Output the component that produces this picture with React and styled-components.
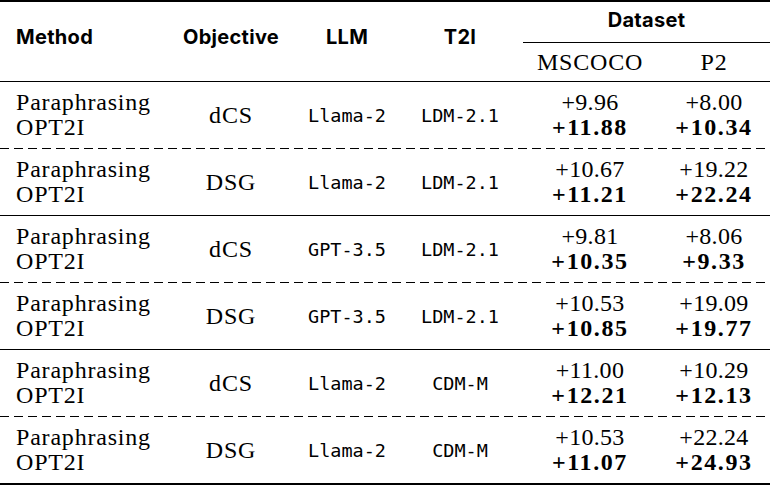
import styled, { createGlobalStyle } from 'styled-components'

const GlobalStyle = createGlobalStyle`
  body {
    margin: 0;
    background: #fff;
    color: #000;
  }
`

const COLS = '178px 106px 126px 100px 160px 100px'

const rows = [
  { obj: 'dCS', llm: 'Llama-2', t2i: 'LDM-2.1', coco: ['+9.96', '+11.88'], p2: ['+8.00', '+10.34'], rule: 'dashed' },
  { obj: 'DSG', llm: 'Llama-2', t2i: 'LDM-2.1', coco: ['+10.67', '+11.21'], p2: ['+19.22', '+22.24'], rule: 'solid' },
  { obj: 'dCS', llm: 'GPT-3.5', t2i: 'LDM-2.1', coco: ['+9.81', '+10.35'], p2: ['+8.06', '+9.33'], rule: 'dashed' },
  { obj: 'DSG', llm: 'GPT-3.5', t2i: 'LDM-2.1', coco: ['+10.53', '+10.85'], p2: ['+19.09', '+19.77'], rule: 'solid' },
  { obj: 'dCS', llm: 'Llama-2', t2i: 'CDM-M', coco: ['+11.00', '+12.21'], p2: ['+10.29', '+12.13'], rule: 'dashed' },
  { obj: 'DSG', llm: 'Llama-2', t2i: 'CDM-M', coco: ['+10.53', '+11.07'], p2: ['+22.24', '+24.93'], rule: 'bottom' },
]

export default function App() {
  return (
    <>
      <GlobalStyle />
      <Table>
        <Rule $thick />
        <Header>
          <HeadCell $left>Method</HeadCell>
          <HeadCell>Objective</HeadCell>
          <HeadCell>LLM</HeadCell>
          <HeadCell>T2I</HeadCell>
          <DatasetGroup>
            <DatasetTitle>Dataset</DatasetTitle>
            <CmidRule />
            <SubHeader>
              <Serif>MSCOCO</Serif>
              <Serif $last>P2</Serif>
            </SubHeader>
          </DatasetGroup>
        </Header>
        <Rule />
        {rows.map((r, i) => (
          <div key={i}>
            <Row>
              <MethodCell>
                <Serif as="span">Paraphrasing</Serif>
                <Serif as="span">OPT2I</Serif>
              </MethodCell>
              <Serif>{r.obj}</Serif>
              <Mono>{r.llm}</Mono>
              <Mono>{r.t2i}</Mono>
              <Values>
                <Num>{r.coco[0]}</Num>
                <Num $bold>{r.coco[1]}</Num>
              </Values>
              <Values $last>
                <Num>{r.p2[0]}</Num>
                <Num $bold>{r.p2[1]}</Num>
              </Values>
            </Row>
            {r.rule === 'dashed' && <Rule $dashed />}
            {r.rule === 'solid' && <Rule />}
            {r.rule === 'bottom' && <Rule $thick />}
          </div>
        ))}
      </Table>
    </>
  )
}

const Table = styled.div`
  width: 770px;
  display: flex;
  flex-direction: column;
`

const Rule = styled.div`
  height: ${p => (p.$thick ? '2px' : '1px')};
  background: ${p =>
    p.$dashed
      ? 'repeating-linear-gradient(to right, #000 0 9px, transparent 9px 14px)'
      : '#000'};
`

const Header = styled.div`
  display: grid;
  grid-template-columns: ${COLS};
  height: 79px;
`

const HeadCell = styled.div`
  font-family: Inter, "Liberation Sans", sans-serif;
  font-weight: 700;
  font-size: 20px;
  letter-spacing: 0.3px;
  line-height: 22px;
  padding-top: 24px;
  padding-left: ${p => (p.$left ? '16px' : '0')};
  text-align: ${p => (p.$left ? 'left' : 'center')};
`

const DatasetGroup = styled.div`
  grid-column: span 2;
  display: flex;
  flex-direction: column;
  padding-top: 7px;
`

const DatasetTitle = styled.div`
  font-family: Inter, "Liberation Sans", sans-serif;
  font-weight: 700;
  font-size: 20px;
  letter-spacing: 0.3px;
  line-height: 22px;
  text-align: center;
  padding-left: 13px;
`

const CmidRule = styled.div`
  height: 1px;
  margin: 11px 0 0 13px;
  background: #000;
`

const SubHeader = styled.div`
  display: grid;
  grid-template-columns: 160px 100px;
  margin-top: 6px;
  line-height: 26px;
`

const Serif = styled.div`
  font-family: "Liberation Serif", "Times New Roman", serif;
  font-size: 24px;
  letter-spacing: 0.8px;
  text-align: center;
  padding-right: ${p => (p.$last ? '12px' : '0')};
`

const Row = styled.div`
  display: grid;
  grid-template-columns: ${COLS};
  align-items: center;
  height: 66px;
`

const MethodCell = styled.div`
  display: flex;
  flex-direction: column;
  padding-left: 16px;
  line-height: 25px;
  span {
    text-align: left;
  }
`

const Mono = styled.div`
  font-family: "DejaVu Sans Mono", "Liberation Mono", monospace;
  font-size: 18.5px;
  color: #000;
  text-align: center;
`

const Values = styled.div`
  display: flex;
  flex-direction: column;
  align-items: center;
  line-height: 25px;
  padding-right: ${p => (p.$last ? '12px' : '0')};
`

const Num = styled.span`
  font-family: "Liberation Serif", "Times New Roman", serif;
  font-size: 24px;
  font-weight: ${p => (p.$bold ? 700 : 400)};
  letter-spacing: ${p => (p.$bold ? '1.6px' : '0.3px')};
`
